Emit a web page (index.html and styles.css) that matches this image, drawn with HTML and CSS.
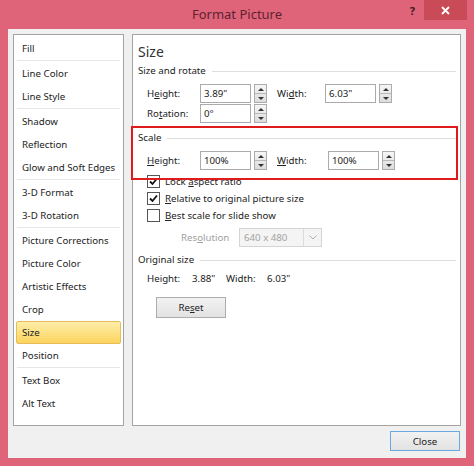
FILE: index.html
```html
<!DOCTYPE html>
<html lang="en">
<head>
  <meta charset="UTF-8">
  <title>Format Picture</title>
  <link rel="stylesheet" href="styles.css">
</head>
<body>
  <div class="window">
    <div class="titlebar">
      <div></div>
      <div class="title">Format Picture</div>
      <div class="caption-btns">
        <span class="help">?</span>
        <span class="close-x">
          <svg width="9" height="9" viewBox="0 0 9 9"><path d="M1 1L8 8M8 1L1 8" stroke="#fff" stroke-width="1.8"/></svg>
        </span>
      </div>
    </div>

    <div class="client">
      <div class="panes">
        <ul class="nav">
          <li>Fill</li>
          <li class="sep"></li>
          <li>Line Color</li>
          <li>Line Style</li>
          <li class="sep"></li>
          <li>Shadow</li>
          <li>Reflection</li>
          <li>Glow and Soft Edges</li>
          <li class="sep"></li>
          <li>3-D Format</li>
          <li>3-D Rotation</li>
          <li class="sep"></li>
          <li>Picture Corrections</li>
          <li>Picture Color</li>
          <li>Artistic Effects</li>
          <li>Crop</li>
          <li class="active">Size</li>
          <li>Position</li>
          <li class="sep"></li>
          <li>Text Box</li>
          <li>Alt Text</li>
        </ul>

        <div class="panel">
          <h1>Size</h1>

          <div class="group-head"><span>Size and rotate</span></div>
          <div class="field-row">
            <span class="lbl">H<u>e</u>ight:</span>
            <span class="textbox">3.89"</span>
            <span class="spin"><i class="up"></i><i class="down"></i></span>
            <span class="lbl lbl2">Wi<u>d</u>th:</span>
            <span class="textbox">6.03"</span>
            <span class="spin"><i class="up"></i><i class="down"></i></span>
          </div>
          <div class="field-row row-rot">
            <span class="lbl">Ro<u>t</u>ation:</span>
            <span class="textbox">0°</span>
            <span class="spin"><i class="up"></i><i class="down"></i></span>
          </div>

          <div class="group-head head-scale"><span>Scale</span></div>
          <div class="field-row row-scale">
            <span class="lbl"><u>H</u>eight:</span>
            <span class="textbox">100%</span>
            <span class="spin"><i class="up"></i><i class="down"></i></span>
            <span class="lbl lbl2 lbl-scale"><u>W</u>idth:</span>
            <span class="textbox">100%</span>
            <span class="spin"><i class="up"></i><i class="down"></i></span>
          </div>

          <div class="checks">
            <div class="check">
              <span class="cb"><svg width="11" height="11" viewBox="0 0 11 11"><path d="M2 5.5L4.5 8L9 2.5" fill="none" stroke="#111" stroke-width="1.8"/></svg></span>
              <span>Lock <u>a</u>spect ratio</span>
            </div>
            <div class="check">
              <span class="cb"><svg width="11" height="11" viewBox="0 0 11 11"><path d="M2 5.5L4.5 8L9 2.5" fill="none" stroke="#111" stroke-width="1.8"/></svg></span>
              <span><u>R</u>elative to original picture size</span>
            </div>
            <div class="check">
              <span class="cb"></span>
              <span><u>B</u>est scale for slide show</span>
            </div>
          </div>

          <div class="res-row">
            <span class="res-lbl">Res<u>o</u>lution</span>
            <span class="select">
              <span class="val">640 x 480</span>
              <span class="arrow"><svg width="8" height="5" viewBox="0 0 8 5"><path d="M0.5 0.5L4 4L7.5 0.5" fill="none" stroke="#b0b0b0" stroke-width="1"/></svg></span>
            </span>
          </div>

          <div class="group-head head-orig"><span>Original size</span></div>
          <div class="orig-row">
            <span class="o-lbl">Height:</span>
            <span class="o-val">3.88"</span>
            <span class="o-lbl o-lbl2">Width:</span>
            <span>6.03"</span>
          </div>

          <button class="btn reset">Re<u>s</u>et</button>

          <div class="callout"></div>
        </div>
      </div>

      <div class="footer">
        <button class="btn default">Close</button>
      </div>
    </div>
  </div>
</body>
</html>
```

FILE: styles.css
```css
body {
  margin: 0;
  background: #df6479;
  font-family: "Noto Sans", "Open Sans", sans-serif;
  font-size: 9.7px;
  color: #222;
}
.window {
  width: 474px;
  height: 466px;
  background: #df6479;
}

/* title bar */
.titlebar {
  height: 29px;
  display: grid;
  grid-template-columns: 1fr auto 1fr;
}
.title {
  font-size: 13px;
  line-height: 29px;
  color: #5e2230;
}
.caption-btns {
  display: flex;
  justify-content: flex-end;
  align-items: flex-start;
  padding-right: 7px;
}
.help {
  font-size: 11px;
  font-weight: bold;
  color: #3a1820;
  line-height: 22px;
  margin-right: 9px;
}
.close-x {
  width: 43px;
  height: 20px;
  background: #c94b57;
  display: flex;
  align-items: center;
  justify-content: center;
}

/* client area */
.client {
  margin: 0 8px;
  height: 429px;
  background: #f0f0f0;
  padding: 5px 5px 0 5px;
  box-sizing: border-box;
}
.panes {
  display: flex;
  gap: 8px;
  height: 392px;
}
.nav {
  list-style: none;
  margin: 0;
  padding: 2px 1px 0 1px;
  width: 111px;
  box-sizing: border-box;
  background: #fff;
  border: 1px solid #a3a3a3;
}
.nav li {
  height: 23px;
  line-height: 23px;
  padding-left: 6px;
  margin: 0 1px;
  white-space: nowrap;
}
.nav li.sep {
  height: 1px;
  padding: 0;
  margin: 0 2px 1px 2px;
  background: #e6e6e6;
}
.nav li.active {
  background: linear-gradient(#fdeea8, #fcd45e);
  border: 1px solid #e6bd5a;
  border-radius: 2px;
  height: 21px;
  line-height: 21px;
  padding-left: 5px;
}

.panel {
  position: relative;
  flex: 1;
  background: #fff;
  border: 1px solid #a3a3a3;
  padding: 7px 4px 0 5px;
}
.panel h1 {
  margin: 0;
  font-size: 14px;
  font-weight: normal;
  line-height: 20px;
  color: #333;
}
.group-head {
  display: flex;
  align-items: center;
  line-height: 16px;
  margin-top: 1px;
}
.group-head::after {
  content: "";
  flex: 1;
  height: 1px;
  background: #dedede;
  margin-left: 6px;
}
.head-scale { margin-top: 7px; }
.head-orig { margin-top: 5px; }

.field-row {
  display: flex;
  align-items: center;
  height: 19px;
  margin: 5px 0 0 9px;
}
.row-rot { margin-top: 1px; }
.lbl {
  width: 53px;
}
.lbl2 {
  width: 48px;
  margin-left: 10px;
}
.lbl-scale {
  width: 51px;
}
.textbox {
  width: 51px;
  height: 19px;
  box-sizing: border-box;
  border: 1px solid #ababab;
  padding-left: 3px;
  line-height: 17px;
}
.spin {
  width: 13px;
  height: 19px;
  box-sizing: border-box;
  margin-left: 3px;
  border: 1px solid #acacac;
  display: flex;
  flex-direction: column;
  background: linear-gradient(#f6f6f6, #dcdcdc);
}
.spin i {
  flex: 1;
  display: flex;
  align-items: center;
  justify-content: center;
}
.spin i.down {
  border-top: 1px solid #b8b8b8;
}
.spin i.up::before,
.spin i.down::before {
  content: "";
  border-left: 3px solid transparent;
  border-right: 3px solid transparent;
}
.spin i.up::before { border-bottom: 3px solid #333; }
.spin i.down::before { border-top: 3px solid #333; }

.checks {
  margin: 3px 0 0 9px;
}
.check {
  display: flex;
  align-items: center;
  height: 17px;
}
.cb {
  width: 13px;
  height: 13px;
  box-sizing: border-box;
  border: 1px solid #555;
  margin-right: 5px;
  display: flex;
  align-items: center;
  justify-content: center;
  background: #fff;
}

.res-row {
  display: flex;
  align-items: center;
  margin: 4px 0 0 43px;
  height: 19px;
}
.res-lbl {
  width: 58px;
  color: #a0a0a0;
}
.select {
  width: 83px;
  height: 19px;
  box-sizing: border-box;
  border: 1px solid #d4d4d4;
  background: #f4f4f4;
  display: flex;
  color: #a3a3a3;
}
.select .val {
  flex: 1;
  padding-left: 4px;
  line-height: 17px;
}
.select .arrow {
  width: 17px;
  border-left: 1px solid #dadada;
  display: flex;
  align-items: center;
  justify-content: center;
}

.orig-row {
  margin: 3px 0 0 9px;
  line-height: 16px;
  display: flex;
}
.o-lbl { width: 45px; }
.o-val { width: 34px; }
.o-lbl2 { width: 41px; }

.btn {
  font-family: inherit;
  font-size: 9.7px;
  color: #222;
  background: linear-gradient(#f2f2f2, #e2e2e2);
  border: 1px solid #adadad;
  padding: 0;
}
.reset {
  display: block;
  width: 70px;
  height: 21px;
  margin: 10px 0 0 18px;
}

/* red annotation frame drawn over the Scale group */
.callout {
  position: absolute;
  left: -2px;
  top: 91px;
  width: 327px;
  height: 54px;
  box-sizing: border-box;
  border: 2px solid #e01b1b;
}

.footer {
  display: flex;
  justify-content: flex-end;
  margin-top: 5px;
  padding-right: 1px;
}
.default {
  width: 70px;
  height: 20px;
  border-color: #6aa8e0;
}
```
